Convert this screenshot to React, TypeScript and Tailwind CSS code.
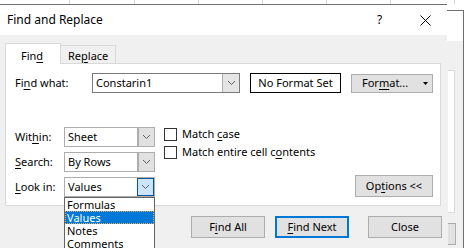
import React from "react";

const U = ({ children }: { children: React.ReactNode }) => (
  <span className="underline underline-offset-2">{children}</span>
);

function Chevron() {
  return (
    <svg width="9" height="6" viewBox="0 0 9 6">
      <path d="M1 1 L4.5 4.5 L8 1" fill="none" stroke="#606060" strokeWidth="1" />
    </svg>
  );
}

function Select({ value, open }: { value: string; open?: boolean }) {
  return (
    <div className="flex h-[20px] w-[91px] border border-[#adadad] bg-white">
      <div className="flex-1 pl-[3px] leading-[18px]">{value}</div>
      <div
        className={
          open
            ? "flex w-[17px] items-center justify-center border border-[#005499] bg-[#cce4f7]"
            : "flex w-[17px] items-center justify-center border-l-2 border-[#adadad] bg-[#e1e1e1]"
        }
      >
        <Chevron />
      </div>
    </div>
  );
}

function Button({ children, primary, className }: { children: React.ReactNode; primary?: boolean; className?: string }) {
  return (
    <div
      className={
        (primary ? "border-2 border-[#0078d7] " : "border border-[#adadad] ") +
        "flex h-[22px] w-[74px] items-center justify-center bg-[#e1e1e1] " +
        (className ?? "")
      }
    >
      {children}
    </div>
  );
}

function Checkbox({ label }: { label: React.ReactNode }) {
  return (
    <div className="flex h-[13px] items-center gap-[5px]">
      <div className="h-[13px] w-[13px] border border-[#333333] bg-white" />
      <span>{label}</span>
    </div>
  );
}

export default function App() {
  const cols = [70, 65, 64, 64, 64, 64, 64];
  return (
    <div className="relative h-[248px] w-[464px] overflow-hidden bg-white font-['Segoe_UI','Noto_Sans',sans-serif] text-[11px] text-black">
      {/* sheet grid behind */}
      <div className="flex h-[4px]">
        {cols.map((w, i) => (
          <div key={i} className="h-full border-r border-[#d4d4d4]" style={{ width: w }} />
        ))}
      </div>

      {/* window behind, right edge */}
      <div className="absolute left-[447px] top-[10px] flex h-[240px] w-[17px] flex-col border-t border-r border-[#6e6e6e]">
        <div className="h-[30px] bg-white" />
        <div className="flex-1 bg-[#f0f0f0] pl-[1px] pt-[29px]">
          <div className="h-[143px] w-[7px] border border-l-0 border-[#d9d9d9] bg-white" />
          <div className="mt-[10px] h-[22px] w-[8px] border border-l-0 border-[#adadad] bg-[#e1e1e1]" />
        </div>
      </div>

      {/* dialog */}
      <div className="absolute left-0 top-[4px] h-[244px] w-[447px] border-t border-[#6e6e6e] bg-[#f0f0f0]">
        <div className="flex h-[30px] items-center bg-white pl-[7px] text-[12px]">
          <span className="w-[370px]">Find and Replace</span>
          <span>?</span>
          <svg className="ml-[38px]" width="11" height="11" viewBox="0 0 11 11">
            <path d="M0.5 0.5 L10.5 10.5 M10.5 0.5 L0.5 10.5" stroke="#000" strokeWidth="1" />
          </svg>
        </div>

        {/* tabs */}
        <div className="relative z-10 ml-[5px] mt-[8px] flex h-[21px] items-start">
          <div className="h-[21px] w-[56px] border border-b-0 border-[#d9d9d9] bg-white pl-[15px] pt-[4px]">
            Fin<U>d</U>
          </div>
          <div className="mt-[2px] h-[19px] w-[55px] border border-l-0 border-[#d9d9d9] bg-[#f0f0f0] pl-[7px] pt-[2px]">
            Re<U>p</U>lace
          </div>
        </div>

        {/* panel */}
        <div className="ml-[5px] mt-[-1px] h-[143px] w-[436px] border border-[#d9d9d9] bg-white pl-[9px] pt-[9px]">
          <div className="flex h-[20px] items-center">
            <div className="w-[77px]">
              Fi<U>n</U>d what:
            </div>
            <div className="flex h-[20px] w-[148px] border border-[#7a7a7a]">
              <div className="flex-1 pl-[3px] leading-[18px]">Constarin1</div>
              <div className="flex w-[17px] items-center justify-center border-l border-[#adadad] bg-[#e5e5e5]">
                <Chevron />
              </div>
            </div>
            <div className="ml-[10px] flex h-[20px] w-[91px] items-center justify-center border border-black">
              No Format Set
            </div>
            <div className="ml-[10px] flex h-[19px] w-[82px] items-center border border-[#adadad] bg-[#e1e1e1] pl-[10px] pr-[4px]">
              <span>
                For<U>m</U>at...
              </span>
              <svg className="ml-auto" width="5" height="3" viewBox="0 0 5 3">
                <path d="M0 0 H5 L2.5 3 Z" fill="#000" />
              </svg>
            </div>
          </div>

          <div className="mt-[34px] flex">
            <div className="flex flex-col gap-[5px]">
              <div className="flex items-center">
                <div className="w-[49px]">
                  Wit<U>h</U>in:
                </div>
                <Select value="Sheet" />
              </div>
              <div className="flex items-center">
                <div className="w-[49px]">
                  <U>S</U>earch:
                </div>
                <Select value="By Rows" />
              </div>
              <div className="flex items-center">
                <div className="w-[49px]">
                  <U>L</U>ook in:
                </div>
                <Select value="Values" open />
              </div>
            </div>
            <div className="ml-[9px] flex flex-1 flex-col pt-[1px]">
              <Checkbox label={<>Match <U>c</U>ase</>} />
              <div className="mt-[5px]">
                <Checkbox label={<>Match entire cell c<U>o</U>ntents</>} />
              </div>
              <div className="mt-[16px] flex justify-end pr-[7px]">
                <div className="flex h-[22px] w-[78px] items-center justify-center border border-[#adadad] bg-[#e1e1e1]">
                  Op<U>t</U>ions &lt;&lt;
                </div>
              </div>
            </div>
          </div>
        </div>

        {/* bottom buttons */}
        <div className="mt-[10px] flex pl-[191px]">
          <Button>
            F<U>i</U>nd All
          </Button>
          <Button primary className="ml-[10px]">
            <U>F</U>ind Next
          </Button>
          <Button className="ml-[19px]">Close</Button>
        </div>
      </div>

      {/* open dropdown list */}
      <div className="absolute left-[64px] top-[197px] z-20 w-[91px] border border-[#646464] bg-white text-[11px] leading-[12px]">
        <div className="h-[13px] overflow-hidden pl-[2px] pt-[1px]">Formulas</div>
        <div className="h-[13px] overflow-hidden border border-dotted border-[#e0b060] bg-[#0078d7] pl-[1px] text-white">Values</div>
        <div className="h-[13px] overflow-hidden pl-[2px] pt-[1px]">Notes</div>
        <div className="h-[13px] overflow-hidden pl-[2px] pt-[1px]">Comments</div>
      </div>
    </div>
  );
}
